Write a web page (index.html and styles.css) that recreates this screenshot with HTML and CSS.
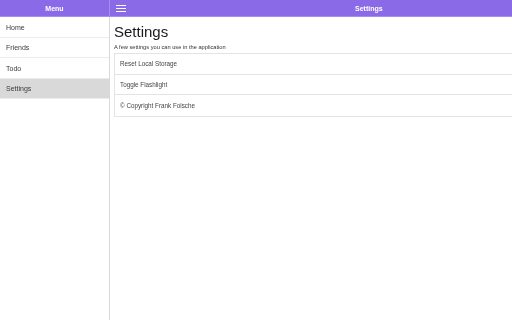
FILE: index.html
```html
<!DOCTYPE html>
<html lang="en">
  <head>
    <meta charset="UTF-8" />
    <meta name="viewport" content="width=device-width, initial-scale=1.0" />
    <title>Settings</title>
    <link rel="stylesheet" href="styles.css">
  </head>
  <body>
    <section class="app">
      <nav class="sidebar">
        <header class="bar bar-left">Menu</header>
        <ul class="menu">
          <li><a href="#">Home</a></li>
          <li><a href="#">Friends</a></li>
          <li><a href="#">Todo</a></li>
          <li class="active"><a href="#">Settings</a></li>
        </ul>
      </nav>

      <main class="page">
        <header class="bar bar-main">
          <span class="burger">
            <svg width="10" height="7" viewBox="0 0 10 7">
              <rect x="0" y="0" width="10" height="1" fill="#fff" />
              <rect x="0" y="3" width="10" height="1" fill="#fff" />
              <rect x="0" y="6" width="10" height="1" fill="#fff" />
            </svg>
          </span>
          <span class="bar-title">Settings</span>
        </header>
        <div class="content">
          <h1>Settings</h1>
          <p class="lead">A few settings you can use in the application</p>
          <ul class="list">
            <li>Reset Local Storage</li>
            <li>Toggle Flashlight</li>
            <li>© Copyright Frank Folsche</li>
          </ul>
        </div>
      </main>
    </section>
  </body>
</html>
```

FILE: styles.css
```css
* {
  margin: 0;
  padding: 0;
  box-sizing: border-box;
}

body {
  font-family: "Liberation Sans", Arial, sans-serif;
  background: #fff;
  color: #333;
}

.app {
  display: grid;
  grid-template-columns: 110px 1fr;
  height: 320px;
  overflow: hidden;
  /* forces grayscale text smoothing like the screenshot */
  will-change: transform;
}

.sidebar {
  border-right: 1px solid #d9d9d9;
}

.bar {
  height: 17px;
  background-color: #8a6ae6;
  color: #fff;
  font-size: 7px;
  display: flex;
  align-items: center;
  border-bottom: 1px solid #a48eee;
}

.bar-left {
  justify-content: center;
  font-weight: bold;
  border-right: 1px solid #a48eee;
  margin-right: -1px;
}

.bar-main {
  position: relative;
  padding-left: 6px;
}

.burger {
  display: flex;
}

.bar-title {
  position: absolute;
  left: 245px;
  font-weight: bold;
}

.menu {
  list-style: none;
}

.menu li {
  height: 20.5px;
  display: flex;
  align-items: center;
  padding: 1px 0 0 6px;
  border-bottom: 1px solid #ececec;
  font-size: 7px;
}

.menu li.active {
  background-color: #d9d9d9;
}

.menu a {
  color: #3a3a3a;
  text-decoration: none;
}

.content {
  padding: 5px 0 0 4px;
}

h1 {
  font-size: 15px;
  font-weight: normal;
  color: #1a1a1a;
  line-height: 19px;
}

.lead {
  font-size: 5.7px;
  color: #333;
  margin-top: 2px;
  line-height: 8px;
}

.list {
  list-style: none;
  margin-top: 2px;
  border: 1px solid #e4e4e4;
  border-right: none;
}

.list li {
  height: 20.5px;
  display: flex;
  align-items: center;
  padding-left: 5px;
  font-size: 6.3px;
  color: #444;
  border-bottom: 1px solid #e4e4e4;
}

.list li:last-child {
  border-bottom: none;
}
```
